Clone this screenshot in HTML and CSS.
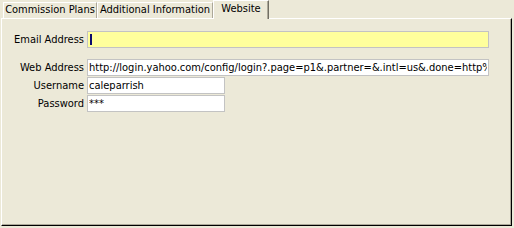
FILE: index.html
```html
<!DOCTYPE html>
<html lang="en">
  <head>
    <meta charset="utf-8" />
    <title>Contact Website</title>
    <link rel="stylesheet" href="styles.css">
  </head>
  <body>
    <div class="tabs">
      <div class="tab tab-plans">Commission Plans</div>
      <div class="tab tab-info">Additional Information</div>
      <div class="tab tab-web selected">Website</div>
    </div>
    <div class="panel">
      <div class="field email">
        <label>Email Address</label>
        <div class="textbox wide focused"><span class="caret"></span></div>
      </div>
      <div class="field">
        <label>Web Address</label>
        <input class="textbox wide" type="text" value="http://login.yahoo.com/config/login?.page=p1&amp;.partner=&amp;.intl=us&amp;.done=http%3A%2F%2Fmy.yahoo.com" readonly>
      </div>
      <div class="field">
        <label>Username</label>
        <input class="textbox short" type="text" value="caleparrish" readonly>
      </div>
      <div class="field">
        <label>Password</label>
        <input class="textbox short" type="text" value="***" readonly>
      </div>
    </div>
  </body>
</html>
```

FILE: styles.css
```css
/* General Reset */
* {
  margin: 0;
  padding: 0;
  box-sizing: border-box;
}

body {
  font-family: "DejaVu Sans Condensed", "DejaVu Sans", sans-serif;
  font-stretch: condensed;
  font-size: 11px;
  background-color: #ece9d8;
  color: #000;
  width: 514px;
  height: 228px;
  overflow: hidden;
}

/* Tabs */
.tabs {
  display: flex;
  align-items: flex-end;
  height: 18px;
  padding-left: 3px;
}

.tab {
  height: 16px;
  line-height: 14px;
  text-align: center;
  white-space: nowrap;
  background-color: #ece9d8;
  border-top: 1px solid #fff;
  border-left: 1px solid #fff;
  border-right: 1px solid #aca899;
}

.tab-plans { width: 94px; }
.tab-info { width: 116px; }

.tab.selected {
  width: 56px;
  height: 19px;
  line-height: 15px;
  margin-bottom: -1px;
  position: relative;
  z-index: 1;
  border-right: 1px solid #716f64;
  box-shadow: inset -1px 0 0 #aca899;
}

/* Panel */
.panel {
  margin-left: 1px;
  width: 511px;
  height: 208px;
  padding: 12px 0 0 4px;
  border-top: 1px solid #fff;
  border-left: 1px solid #fff;
  border-right: 1px solid #000;
  border-bottom: 1px solid #000;
  box-shadow: inset -1px -1px 0 #aca899;
}

.field {
  display: flex;
  align-items: center;
  gap: 3px;
}

.field + .field {
  margin-top: 1px;
}

.field.email {
  margin-bottom: 11px;
}

.field label {
  width: 78px;
  text-align: right;
  white-space: nowrap;
}

.textbox {
  height: 17px;
  border: 1px solid #c3c3c3;
  background-color: #fff;
  font: inherit;
  font-stretch: condensed;
  color: #000;
  padding: 0 1px;
  outline: none;
}

.textbox.wide { width: 402px; }
.textbox.short { width: 138px; }

.textbox.focused {
  background-color: #ffff9c;
  display: flex;
  align-items: center;
  padding-left: 2px;
}

.caret {
  width: 2px;
  height: 11px;
  background-color: #0c0c6e;
}
```
